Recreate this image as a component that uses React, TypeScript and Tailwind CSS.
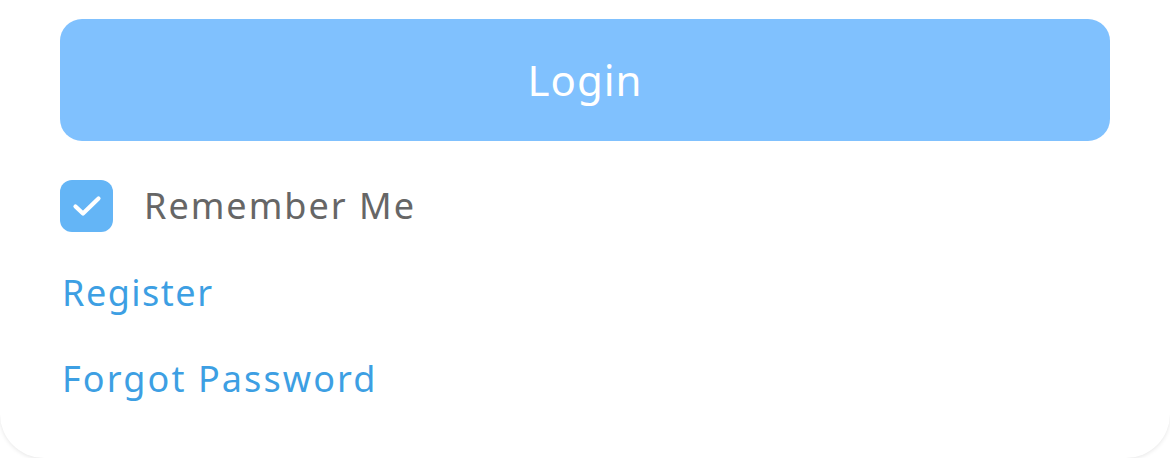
import { useState } from "react"

export default function App() {
  const [remember, setRemember] = useState(true)

  return (
    <div className="w-[1170px] h-[458px] bg-white overflow-hidden" style={{ fontFamily: '"Noto Sans", "Open Sans", sans-serif' }}>
      <div className="h-[458px] bg-white rounded-b-[44px] shadow-[0_1px_4px_rgba(0,0,0,0.1)] px-[60px] pt-[19px]">
        {/* Login button */}
        <button className="w-full h-[122px] rounded-[22px] bg-[#80c1fe] text-white text-[42px] tracking-[1px] leading-none flex items-center justify-center">
          Login
        </button>

        {/* Remember me */}
        <label className="mt-[39px] flex items-center gap-[31px] cursor-pointer select-none">
          <button
            type="button"
            onClick={() => setRemember(!remember)}
            className="w-[53px] h-[52px] rounded-[12px] bg-[#64b5f6] flex items-center justify-center"
          >
            {remember && (
              <svg width="30" height="24" viewBox="0 0 30 24" fill="none">
                <path d="M3.5 12.5l7.5 7L26.5 4.5" stroke="white" strokeWidth="4.2" strokeLinecap="round" strokeLinejoin="round" />
              </svg>
            )}
          </button>
          <span className="text-[36px] tracking-[2px] leading-none text-[#666666]">Remember Me</span>
        </label>

        {/* Links */}
        <div className="mt-[43px] flex flex-col items-start gap-[50px] pl-[2px]">
          <a className="text-[36px] tracking-[1.5px] leading-none text-[#3d9fe3]">Register</a>
          <a className="text-[36px] tracking-[2.1px] leading-none text-[#3d9fe3]">Forgot Password</a>
        </div>
      </div>
    </div>
  )
}
